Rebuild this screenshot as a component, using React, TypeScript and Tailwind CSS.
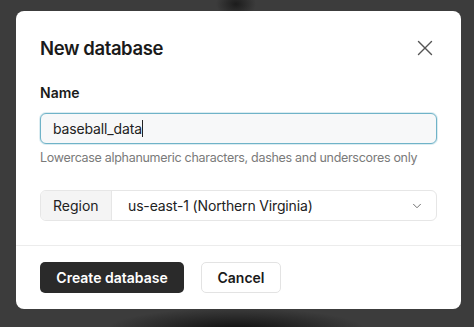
import { X, ChevronDown } from 'lucide-react';

export default function App() {
  return (
    <div
      className="w-[474px] h-[327px] overflow-hidden bg-[#3c3c3c] pt-[11px] pl-[16px] bg-[radial-gradient(ellipse_130px_22px_at_236px_330px,#101010,transparent),radial-gradient(ellipse_20px_14px_at_236px_4px,#1c1c1c,transparent)]"
      style={{ fontFamily: 'Inter, "Noto Sans", sans-serif' }}
    >
      <div className="w-[445px] h-[298px] bg-white rounded-[8px] flex flex-col">
        <div className="px-[24px] pt-[25px]">
          <div className="h-[24px] flex items-center justify-between">
            <h2 className="text-[18.5px] leading-[24px] font-semibold text-[#1a1a1a] tracking-[-0.4px]">New database</h2>
            <X className="w-[26px] h-[26px] -my-[1px] text-[#555] -mr-[1px]" strokeWidth={1.3} />
          </div>

          <div className="mt-[24px] text-[14px] leading-[18px] font-semibold text-[#1a1a1a]">Name</div>
          <div className="mt-[11px] h-[31px] rounded-[6px] border-[1.5px] border-[#6fb3c8] bg-[#f7f8f9] flex items-center px-[12px] shadow-[0_0_0_1px_rgba(111,179,200,0.25)]">
            <span className="text-[14px] text-[#222] tracking-[-0.15px]">baseball_data</span>
            <span className="w-px h-[17px] bg-[#222]" />
          </div>
          <div className="mt-[6px] text-[12.5px] leading-[16px] text-[#7a7a7a] tracking-[-0.3px] whitespace-nowrap">
            Lowercase alphanumeric characters, dashes and underscores only
          </div>

          <div className="mt-[24px] h-[31px] rounded-[6px] border border-[#e6e6e6] flex overflow-hidden">
            <div className="w-[71px] bg-[#f4f4f4] border-r border-[#e6e6e6] flex items-center pl-[12px] text-[14px] text-[#222]">
              Region
            </div>
            <div className="flex-1 flex items-center justify-between pl-[16px] pr-[12px] text-[14px] text-[#222] tracking-[-0.15px]">
              <span>us-east-1 (Northern Virginia)</span>
              <ChevronDown className="w-[14px] h-[14px] text-[#666]" strokeWidth={1.6} />
            </div>
          </div>
        </div>

        <div className="mt-[24px] border-t border-[#ececec] px-[24px] pt-[16px] flex gap-[17px]">
          <button className="h-[31px] w-[144px] rounded-[5px] bg-[#2a2a2a] text-white text-[14px] font-semibold">
            Create database
          </button>
          <button className="h-[31px] w-[80px] rounded-[5px] border border-[#e3e3e3] bg-white text-[#1a1a1a] text-[14px] font-semibold">
            Cancel
          </button>
        </div>
      </div>
    </div>
  );
}
